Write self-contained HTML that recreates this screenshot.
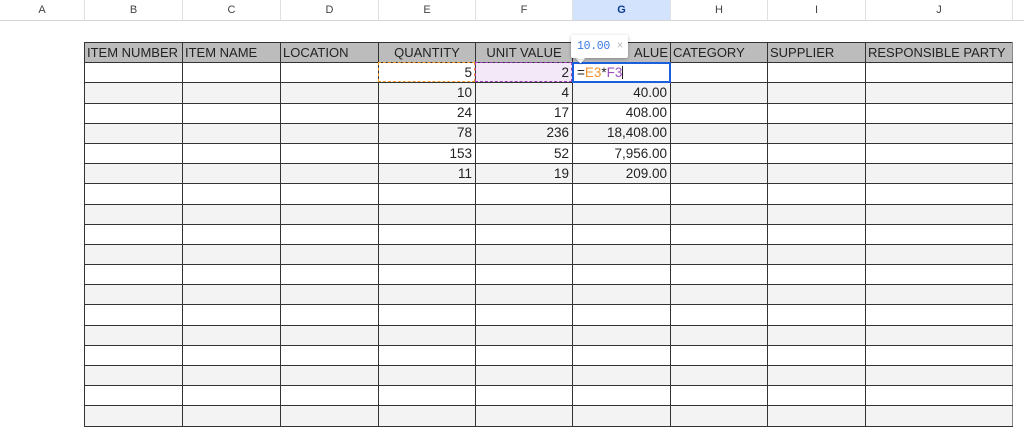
<!DOCTYPE html>
<html><head><style>
body{margin:0;width:1024px;height:434px;background:#fff;position:relative;overflow:hidden;font-family:"Liberation Sans",Arial,sans-serif;}
.ch{position:absolute;top:0;height:21px;border-right:1px solid #e0e0e0;border-bottom:1px solid #d6d6d6;box-sizing:border-box;font-size:11px;color:#444;text-align:center;line-height:21px;}
table{position:absolute;left:84px;top:42px;border-collapse:collapse;table-layout:fixed;width:928px;font-size:13.5px;color:#222;}
td{border:1px solid #333;padding:0 3px;height:19.2px;line-height:18px;white-space:nowrap;overflow:hidden;text-align:right;}
tr.h td{background:#bcbcbc;text-align:left;font-size:13px;padding:0 2px;}
tr.h td.c{text-align:center;}
tr:nth-child(odd):not(.h) td{background:#f3f3f3;}
td:last-child{border-right-color:#888;}
</style></head><body>
<div class="ch" style="left:0;width:85px">A</div>
<div class="ch" style="left:85px;width:98px">B</div>
<div class="ch" style="left:183px;width:98px">C</div>
<div class="ch" style="left:281px;width:98px">D</div>
<div class="ch" style="left:379px;width:97px">E</div>
<div class="ch" style="left:476px;width:97px">F</div>
<div class="ch" style="left:573px;width:98px;background:#d3e3fd;color:#0b3d91;font-weight:bold">G</div>
<div class="ch" style="left:671px;width:97px">H</div>
<div class="ch" style="left:768px;width:98px">I</div>
<div class="ch" style="left:866px;width:147px">J</div>
<div class="ch" style="left:1013px;width:11px;border-right:none"></div>
<table>
<colgroup><col style="width:98px"><col style="width:98px"><col style="width:98px"><col style="width:97px"><col style="width:97px"><col style="width:98px"><col style="width:97px"><col style="width:98px"><col style="width:147px"></colgroup>
<tr class="h"><td>ITEM NUMBER</td><td>ITEM NAME</td><td>LOCATION</td><td class="c">QUANTITY</td><td class="c">UNIT VALUE</td><td style="text-align:right">ALUE</td><td>CATEGORY</td><td>SUPPLIER</td><td>RESPONSIBLE PARTY</td></tr>
<tr><td></td><td></td><td></td><td style="background:#fff">5</td><td style="background:#f3e8f7">2</td><td></td><td></td><td></td><td></td></tr>
<tr><td></td><td></td><td></td><td>10</td><td>4</td><td>40.00</td><td></td><td></td><td></td></tr>
<tr><td></td><td></td><td></td><td>24</td><td>17</td><td>408.00</td><td></td><td></td><td></td></tr>
<tr><td></td><td></td><td></td><td>78</td><td>236</td><td>18,408.00</td><td></td><td></td><td></td></tr>
<tr><td></td><td></td><td></td><td>153</td><td>52</td><td>7,956.00</td><td></td><td></td><td></td></tr>
<tr><td></td><td></td><td></td><td>11</td><td>19</td><td>209.00</td><td></td><td></td><td></td></tr>
<tr><td></td><td></td><td></td><td></td><td></td><td></td><td></td><td></td><td></td></tr>
<tr><td></td><td></td><td></td><td></td><td></td><td></td><td></td><td></td><td></td></tr>
<tr><td></td><td></td><td></td><td></td><td></td><td></td><td></td><td></td><td></td></tr>
<tr><td></td><td></td><td></td><td></td><td></td><td></td><td></td><td></td><td></td></tr>
<tr><td></td><td></td><td></td><td></td><td></td><td></td><td></td><td></td><td></td></tr>
<tr><td></td><td></td><td></td><td></td><td></td><td></td><td></td><td></td><td></td></tr>
<tr><td></td><td></td><td></td><td></td><td></td><td></td><td></td><td></td><td></td></tr>
<tr><td></td><td></td><td></td><td></td><td></td><td></td><td></td><td></td><td></td></tr>
<tr><td></td><td></td><td></td><td></td><td></td><td></td><td></td><td></td><td></td></tr>
<tr><td></td><td></td><td></td><td></td><td></td><td></td><td></td><td></td><td></td></tr>
<tr><td></td><td></td><td></td><td></td><td></td><td></td><td></td><td></td><td></td></tr>
<tr><td></td><td></td><td></td><td></td><td></td><td></td><td></td><td></td><td></td></tr>
</table>
<div style="position:absolute;left:378px;top:62px;width:97px;height:20px;box-sizing:border-box;border:1.5px dashed #f39a2b"></div>
<div style="position:absolute;left:475px;top:62px;width:97px;height:20px;box-sizing:border-box;border:1.5px dashed #9c3fb8"></div>
<div style="position:absolute;left:572px;top:62px;width:99px;height:21px;box-sizing:border-box;border:2px solid #1a5fdb;background:#fff;font-size:13.5px;line-height:17px;padding-left:3px;color:#222">=<span style="color:#f0932b">E3</span>*<span style="color:#9c4fbd">F3</span><span style="display:inline-block;width:1px;height:13px;background:#222;vertical-align:-2px"></span></div>
<div style="position:absolute;left:577px;top:55px;width:7px;height:7px;background:#fff;transform:rotate(45deg);box-shadow:1px 1px 1px rgba(0,0,0,.15)"></div>
<div style="position:absolute;left:571px;top:35px;width:57px;height:23px;background:#fff;box-shadow:0 1px 3px rgba(0,0,0,.3);border-radius:2px;font-family:'Liberation Mono',monospace;font-size:11.5px;letter-spacing:-0.3px;line-height:23px;color:#3b78e7;padding-left:6px;box-sizing:border-box;white-space:nowrap">10.00 <span style="color:#bbb">×</span></div>
<div style="position:absolute;left:578px;top:56px;width:6px;height:3px;background:#fff"></div>
</body></html>
